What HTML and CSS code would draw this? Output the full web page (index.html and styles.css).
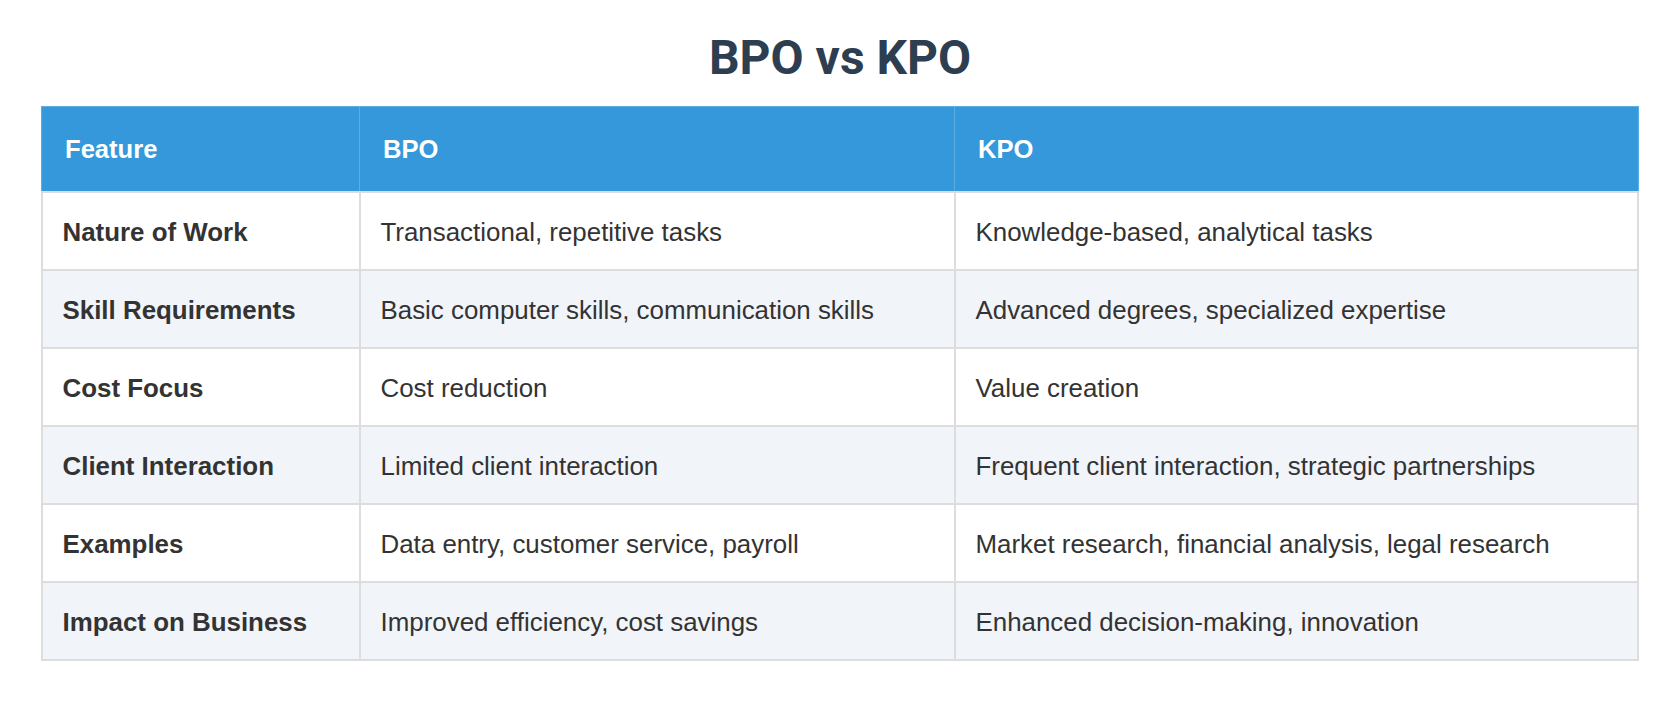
FILE: index.html
```html
<!DOCTYPE html>
<html lang="en">
<head>
<meta charset="utf-8">
<title>BPO vs KPO</title>
<link rel="stylesheet" href="styles.css">
</head>
<body>
<main class="page">
  <h1 class="title">BPO vs KPO</h1>
  <table class="compare">
    <thead>
      <tr>
        <th class="c1">Feature</th>
        <th class="c2">BPO</th>
        <th class="c3">KPO</th>
      </tr>
    </thead>
    <tbody>
      <tr>
        <td class="feat">Nature of Work</td>
        <td>Transactional, repetitive tasks</td>
        <td>Knowledge-based, analytical tasks</td>
      </tr>
      <tr>
        <td class="feat">Skill Requirements</td>
        <td>Basic computer skills, communication skills</td>
        <td>Advanced degrees, specialized expertise</td>
      </tr>
      <tr>
        <td class="feat">Cost Focus</td>
        <td>Cost reduction</td>
        <td>Value creation</td>
      </tr>
      <tr>
        <td class="feat">Client Interaction</td>
        <td>Limited client interaction</td>
        <td>Frequent client interaction, strategic partnerships</td>
      </tr>
      <tr>
        <td class="feat">Examples</td>
        <td>Data entry, customer service, payroll</td>
        <td>Market research, financial analysis, legal research</td>
      </tr>
      <tr>
        <td class="feat">Impact on Business</td>
        <td>Improved efficiency, cost savings</td>
        <td>Enhanced decision-making, innovation</td>
      </tr>
    </tbody>
  </table>
</main>
</body>
</html>
```

FILE: styles.css
```css
* {
  box-sizing: border-box;
}

html, body {
  margin: 0;
  padding: 0;
  background: #ffffff;
}

body {
  font-family: "Liberation Sans", Arial, sans-serif;
  color: #333333;
}

.page {
  padding: 31px 41px 0;
}

.title {
  font-family: Roboto, "Liberation Sans", sans-serif;
  font-weight: 700;
  font-size: 48px;
  line-height: 54px;
  color: #2c3e50;
  text-align: center;
  margin: 0 0 21px;
}

.compare {
  width: 1598px;
  margin: 0 auto;
  border-collapse: separate;
  border-spacing: 0;
  table-layout: fixed;
  font-size: 25.6px;
  line-height: 30px;
}

.compare th {
  background: #3498db;
  color: #ffffff;
  font-weight: 700;
  text-align: left;
  padding: 27px 23px 27px 23px;
  border-top: 1px solid #5dade2;
  border-left: 1px solid #5dade2;
}

.compare th.c1 { width: 318px; }
.compare th.c2 { width: 595px; }
.compare th.c3 { width: 685px; border-right: 1px solid #5dade2; }

.compare td {
  padding: 24px 19.5px 22px 19.5px;
  border-top: 2px solid #dddddd;
  border-left: 2px solid #dddddd;
  color: #333333;
  font-size: 25.9px;
  vertical-align: middle;
}

.compare td:last-child {
  border-right: 2px solid #dddddd;
}

.compare tbody tr:last-child td {
  border-bottom: 2px solid #dddddd;
}

.compare tbody tr:nth-child(even) td {
  background: #f1f4f9;
}

.compare td.feat {
  font-weight: 700;
}
```
